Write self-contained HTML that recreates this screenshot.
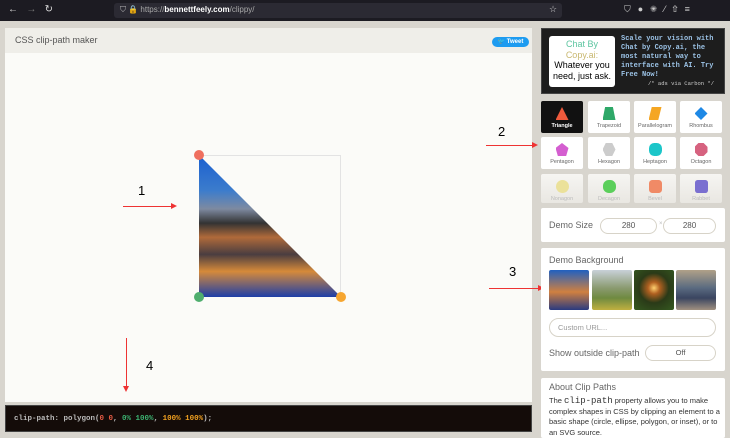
<!DOCTYPE html>
<html><head><style>
*{margin:0;padding:0;box-sizing:border-box}
body{width:730px;height:435px;overflow:hidden;background:#d8d5ce;font-family:"Liberation Sans",sans-serif;position:relative}
.a{position:absolute}
.card{background:#fff;border-radius:2px}
.sh{position:absolute;width:42px;height:32px;background:#fff;border-radius:2px;text-align:center;font-size:5.5px;color:#666}
.sh i{display:block;width:13px;height:13px;margin:6px auto 3px}
.dim{background:linear-gradient(#f6f5f2,#e9e7e2);color:#bbb}
.pill{position:absolute;border:1px solid #d7d3c8;border-radius:12px;background:#fff;font-size:8px;color:#555;text-align:center}
.mono{font-family:"Liberation Mono",monospace}
</style></head><body>
<div class="a" style="left:0;top:0;width:730px;height:21px;background:#1c1b22"></div>
<div class="a" style="left:114px;top:3px;width:448px;height:15px;background:#2b2a33;border-radius:3px"></div>
<div class="a" style="left:8px;top:4px;color:#ddd;font-size:10px">←&nbsp;&nbsp;&nbsp;<span style="color:#777">→</span>&nbsp;&nbsp;&nbsp;↻</div>
<div class="a" style="left:120px;top:5px;color:#bbb;font-size:8px">⛉ 🔒&nbsp;<span style="color:#aaa">https://</span><b style="color:#fff">bennettfeely.com</b><span style="color:#aaa">/clippy/</span></div>
<div class="a" style="left:549px;top:4px;color:#ccc;font-size:9px">☆</div>
<div class="a" style="left:624px;top:4px;color:#ccc;font-size:9px;letter-spacing:7px">⛉●✺⁄⇧≡</div>

<div class="a" style="left:5px;top:28px;width:527px;height:374px;background:#fbfbf8"></div>
<div class="a" style="left:5px;top:28px;width:527px;height:25px;background:#efeee9"></div>
<div class="a" style="left:15px;top:35px;font-size:9px;color:#555">CSS clip-path maker</div>
<div class="a" style="left:492px;top:37px;width:37px;height:10px;background:#1d9bf0;border-radius:5px;color:#fff;font-size:6px;font-weight:bold;text-align:center;line-height:10px">🐦 Tweet</div>

<div class="a" style="left:199px;top:155px;width:142px;height:142px;border:1px solid #e3e3e3"></div>
<div class="a" style="left:199px;top:155px;width:142px;height:142px;clip-path:polygon(0 0,0 100%,100% 100%);background:linear-gradient(#1a5fd0 0%,#3c7ccc 25%,#7e8aa0 38%,#333 48%,#b06a3a 58%,#4a3d40 70%,#d68a3a 82%,#1d3ea8 100%)"></div>
<div class="a" style="left:194px;top:150px;width:10px;height:10px;border-radius:50%;background:#ef6f5e"></div>
<div class="a" style="left:194px;top:292px;width:10px;height:10px;border-radius:50%;background:#4fae6e"></div>
<div class="a" style="left:336px;top:292px;width:10px;height:10px;border-radius:50%;background:#f6a630"></div>

<div class="a" style="left:138px;top:183px;font-size:13px">1</div>
<div class="a" style="left:123px;top:206px;width:50px;height:1px;background:#e33"></div><div class="a" style="left:171px;top:203px;border-left:6px solid #e33;border-top:3px solid transparent;border-bottom:3px solid transparent"></div>
<div class="a" style="left:498px;top:124px;font-size:13px">2</div>
<div class="a" style="left:486px;top:145px;width:48px;height:1px;background:#e33"></div><div class="a" style="left:532px;top:142px;border-left:6px solid #e33;border-top:3px solid transparent;border-bottom:3px solid transparent"></div>
<div class="a" style="left:509px;top:264px;font-size:13px">3</div>
<div class="a" style="left:489px;top:288px;width:50px;height:1px;background:#e33"></div><div class="a" style="left:538px;top:285px;border-left:6px solid #e33;border-top:3px solid transparent;border-bottom:3px solid transparent"></div>
<div class="a" style="left:146px;top:358px;font-size:13px">4</div>
<div class="a" style="left:126px;top:338px;width:1px;height:50px;background:#e33"></div><div class="a" style="left:123px;top:386px;border-top:6px solid #e33;border-left:3px solid transparent;border-right:3px solid transparent"></div>

<div class="a mono" style="left:5px;top:405px;width:527px;height:27px;background:#140c09;border:1px solid #444;font-size:7.5px;color:#bbb;padding:9px 8px;font-weight:bold">clip-path: polygon(<span style="color:#e85c45">0 0</span>, <span style="color:#3cb371">0% 100%</span>, <span style="color:#f0a020">100% 100%</span>);</div>

<div class="a" style="left:541px;top:28px;width:184px;height:66px;background:#1d1d1d;border:1px solid #444"></div>
<div class="a" style="left:549px;top:36px;width:66px;height:51px;background:#fff;border-radius:3px;text-align:center;font-size:9px;line-height:10.5px;padding-top:3px"><span style="color:#5cc5a0">Chat By</span><br><span style="color:#c9b870">Copy.ai:</span><br>Whatever you<br>need, just ask.</div>
<div class="a mono" style="left:621px;top:35px;width:104px;font-size:7px;line-height:9px;color:#9cc3e6;font-weight:bold">Scale your vision with Chat by Copy.ai, the most natural way to interface with AI. Try Free Now!</div>
<div class="a mono" style="left:648px;top:80px;font-size:5.5px;color:#ccc">/* ads via Carbon */</div>

<div class="sh" style="left:541px;top:101px;background:#111;color:#fff;font-weight:bold"><i style="background:#ef5a3c;clip-path:polygon(50% 0,0 100%,100% 100%)"></i>Triangle</div>
<div class="sh" style="left:588px;top:101px"><i style="background:#2ea868;clip-path:polygon(20% 0,80% 0,100% 100%,0 100%)"></i>Trapezoid</div>
<div class="sh" style="left:634px;top:101px"><i style="background:#f5a623;clip-path:polygon(25% 0,100% 0,75% 100%,0 100%)"></i>Parallelogram</div>
<div class="sh" style="left:680px;top:101px"><i style="background:#1e88e5;clip-path:polygon(50% 0,100% 50%,50% 100%,0 50%)"></i>Rhombus</div>
<div class="sh" style="left:541px;top:137px"><i style="background:#d45ed0;clip-path:polygon(50% 0,100% 38%,82% 100%,18% 100%,0 38%)"></i>Pentagon</div>
<div class="sh" style="left:588px;top:137px"><i style="background:#ccc;clip-path:polygon(25% 0,75% 0,100% 50%,75% 100%,25% 100%,0 50%)"></i>Hexagon</div>
<div class="sh" style="left:634px;top:137px"><i style="background:#1cc6c9;border-radius:40%"></i>Heptagon</div>
<div class="sh" style="left:680px;top:137px"><i style="background:#d6627f;clip-path:polygon(30% 0,70% 0,100% 30%,100% 70%,70% 100%,30% 100%,0 70%,0 30%)"></i>Octagon</div>
<div class="sh dim" style="left:541px;top:174px;height:29px"><i style="background:#ebe19a;border-radius:50%"></i>Nonagon</div>
<div class="sh dim" style="left:588px;top:174px;height:29px"><i style="background:#5bcf5b;border-radius:45%"></i>Decagon</div>
<div class="sh dim" style="left:634px;top:174px;height:29px"><i style="background:#f08a66;border-radius:25%"></i>Bevel</div>
<div class="sh dim" style="left:680px;top:174px;height:29px"><i style="background:#7a6fd0;border-radius:20%"></i>Rabbet</div>

<div class="a card" style="left:541px;top:208px;width:184px;height:34px"></div>
<div class="a" style="left:549px;top:220px;font-size:9px;color:#666">Demo Size</div>
<div class="pill" style="left:600px;top:218px;width:57px;height:16px;line-height:14px">280</div>
<div class="a" style="left:659px;top:221px;font-size:6px;color:#bbb">×</div>
<div class="pill" style="left:663px;top:218px;width:53px;height:16px;line-height:14px">280</div>

<div class="a card" style="left:541px;top:248px;width:184px;height:123px"></div>
<div class="a" style="left:549px;top:255px;font-size:9px;color:#666">Demo Background</div>
<div class="a" style="left:549px;top:270px;width:40px;height:40px;border-radius:2px;background:linear-gradient(#2060c0,#d08040 55%,#2a3a80)"></div>
<div class="a" style="left:592px;top:270px;width:40px;height:40px;border-radius:2px;background:linear-gradient(#c8d0d8,#8a9a70 45%,#6f8a40 70%,#c0b040)"></div>
<div class="a" style="left:634px;top:270px;width:40px;height:40px;border-radius:2px;background:radial-gradient(circle at 50% 45%,#ffd070 0,#b06020 20%,#2a3a18 50%,#355a20)"></div>
<div class="a" style="left:676px;top:270px;width:40px;height:40px;border-radius:2px;background:linear-gradient(#b0a088,#5a6a80 45%,#3a4560 70%,#a09080)"></div>
<div class="pill" style="left:549px;top:318px;width:167px;height:19px;text-align:left;padding:4px 8px;color:#999;font-size:7.5px">Custom URL...</div>
<div class="a" style="left:549px;top:348px;font-size:9px;color:#666">Show outside clip-path</div>
<div class="pill" style="left:645px;top:345px;width:71px;height:16px;line-height:14px;font-size:7.5px">Off</div>

<div class="a card" style="left:541px;top:378px;width:184px;height:60px"></div>
<div class="a" style="left:549px;top:382px;font-size:9px;color:#666">About Clip Paths</div>
<div class="a" style="left:549px;top:396px;width:172px;font-size:7.5px;line-height:10.5px;color:#333">The <span class="mono" style="font-size:9px">clip-path</span> property allows you to make complex shapes in CSS by clipping an element to a basic shape (circle, ellipse, polygon, or inset), or to an SVG source.</div>
</body></html>
